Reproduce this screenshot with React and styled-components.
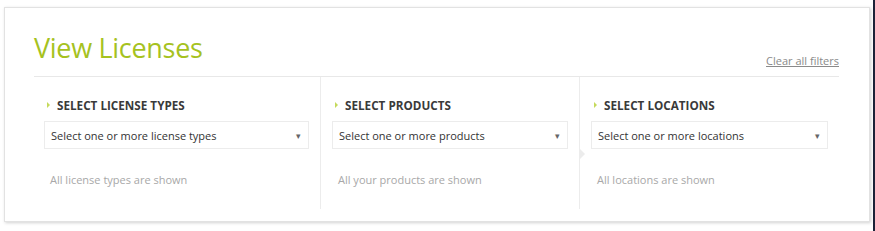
import styled, { createGlobalStyle } from "styled-components";

const GlobalStyle = createGlobalStyle`
    * {
        box-sizing: border-box;
    }

    body {
        margin: 0;
        background-color: #fff;
        font-family: "Open Sans", "Liberation Sans", sans-serif;
    }
`;

const filters = [
    { title: "SELECT LICENSE TYPES", placeholder: "Select one or more license types", note: "All license types are shown" },
    { title: "SELECT PRODUCTS", placeholder: "Select one or more products", note: "All your products are shown" },
    { title: "SELECT LOCATIONS", placeholder: "Select one or more locations", note: "All locations are shown" }
];

export default function App() {
    return (
        <Page>
            <GlobalStyle />
            <Card>
                <CardHeader>
                    <h1>View Licenses</h1>
                    <a href="#">Clear all filters</a>
                </CardHeader>
                <Filters>
                    {filters.map((filter, index) => (
                        <FilterColumn key={index} first={index === 0} pointer={index === 2}>
                            <FilterTitle>{filter.title}</FilterTitle>
                            <Dropdown>
                                <span>{filter.placeholder}</span>
                                <span className="caret">▾</span>
                            </Dropdown>
                            <Note>{filter.note}</Note>
                        </FilterColumn>
                    ))}
                </Filters>
            </Card>
        </Page>
    );
}

const Page = styled.div`
    width: 875px;
    height: 231px;
    padding: 7px 5px 0 4px;
    border-right: 2px solid #1d2238;
`;

const Card = styled.section`
    width: 866px;
    height: 215px;
    background-color: #fff;
    border: 1px solid #e2e2e2;
    box-shadow: 1px 1px 3px rgba(0, 0, 0, 0.18);
    padding: 0 30px 0 29px;
`;

const CardHeader = styled.header`
    height: 69px;
    display: flex;
    justify-content: space-between;
    align-items: flex-end;
    border-bottom: 1px solid #e8e8e8;
    padding-bottom: 7px;

    h1 {
        margin: 0;
        font-size: 27px;
        font-weight: 400;
        line-height: 38px;
        color: #a6c21f;
        letter-spacing: -0.3px;
        margin-bottom: 2px;
    }

    a {
        font-size: 11px;
        color: #8a8a8a;
        text-decoration: underline;
        line-height: 16px;
    }
`;

const Filters = styled.div`
    display: grid;
    grid-template-columns: 286px 259px 1fr;
    height: 132px;
`;

const FilterColumn = styled.div`
    position: relative;
    padding: 18px 11px 0 ${({ first }) => (first ? "10px" : "11px")};
    border-left: ${({ first }) => (first ? "none" : "1px solid #ececec")};

    &::before {
        content: "";
        display: ${({ pointer }) => (pointer ? "block" : "none")};
        position: absolute;
        left: 0;
        top: 72px;
        border-top: 5px solid transparent;
        border-bottom: 5px solid transparent;
        border-left: 5px solid #ececec;
    }
`;

const FilterTitle = styled.h3`
    margin: 0 0 6px 2px;
    font-size: 11.7px;
    font-weight: 700;
    color: #3a3a3a;
    line-height: 20px;
    display: flex;
    align-items: center;

    &::before {
        content: "";
        width: 0;
        height: 0;
        border-top: 3px solid transparent;
        border-bottom: 3px solid transparent;
        border-left: 3px solid #c5da5c;
        margin: 0 7px 0 1px;
    }
`;

const Dropdown = styled.div`
    height: 28px;
    border: 1px solid #ececec;
    display: flex;
    align-items: center;
    justify-content: space-between;
    padding: 0 7px 0 6px;
    font-size: 11px;
    color: #333;

    .caret {
        font-size: 9px;
        color: #666;
    }
`;

const Note = styled.p`
    margin: 23px 0 0 6px;
    font-size: 11px;
    color: #a8a8a8;
`;
